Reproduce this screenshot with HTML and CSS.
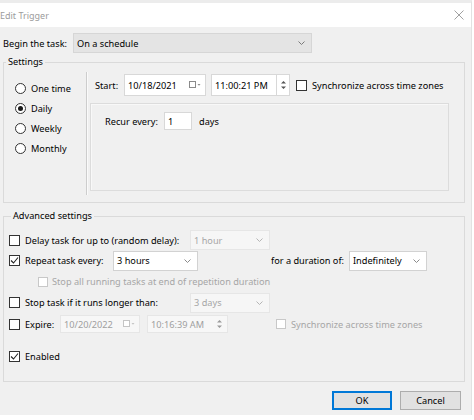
FILE: index.html
```html
<!DOCTYPE html>
<html>
<head>
<meta charset="utf-8">
<title>Edit Trigger</title>
<link rel="stylesheet" href="styles.css">
</head>
<body>
<div class="dialog">
  <div class="titlebar">
    <span class="title">Edit Trigger</span>
    <svg class="close" width="10" height="10" viewBox="0 0 10 10"><path d="M0.5 0.5L9.5 9.5M9.5 0.5L0.5 9.5" stroke="#a0a0a0" stroke-width="1"/></svg>
  </div>
  <div class="content">
    <div class="begin-row">
      <span class="begin-label">Begin the task:</span>
      <div class="combo grey w-begin"><span>On a schedule</span><svg class="chev" width="7" height="4" viewBox="0 0 7 4"><path d="M0.5 0.5L3.5 3.5L6.5 0.5" fill="none" stroke="#7a7a7a"/></svg></div>
    </div>

    <fieldset class="group settings">
      <legend>Settings</legend>
      <div class="radios">
        <div class="radio-row"><span class="radio"></span>One time</div>
        <div class="radio-row"><span class="radio on"></span>Daily</div>
        <div class="radio-row"><span class="radio"></span>Weekly</div>
        <div class="radio-row"><span class="radio"></span>Monthly</div>
      </div>
      <div class="vsep"></div>
      <div class="pane">
        <div class="start-row">
          <span class="start-label">Start:</span>
          <div class="field date"><span>10/18/2021</span><svg class="cal" width="12" height="8" viewBox="0 0 12 8"><rect x="0.5" y="0.5" width="6" height="6" fill="#fff" stroke="#8a8a8a"/><path d="M8.5 3L11.5 3L10 4.8Z" fill="#8a8a8a"/></svg></div>
          <div class="field time"><span>11:00:21 PM</span></div>
          <div class="spin"><svg width="7" height="12" viewBox="0 0 7 12"><path d="M1 4.5L3.5 2L6 4.5Z M1 7.5L3.5 10L6 7.5Z" fill="#555"/></svg></div>
          <span class="cb sync-cb"></span>
          <span>Synchronize across time zones</span>
        </div>
        <div class="recur-box">
          <div class="recur-row">
            <span class="recur-label">Recur every:</span>
            <div class="field recur">1</div>
            <span class="days">days</span>
          </div>
        </div>
      </div>
    </fieldset>

    <fieldset class="group advanced">
      <legend>Advanced settings</legend>
      <div class="adv-row r1">
        <div class="cbl w181"><span class="cb"></span><span>Delay task for up to (random delay):</span></div>
        <div class="combo disabled w80"><span>1 hour</span><svg class="chev" width="7" height="4" viewBox="0 0 7 4"><path d="M0.5 0.5L3.5 3.5L6.5 0.5" fill="none" stroke="#b5b5b5"/></svg></div>
      </div>
      <div class="adv-row r2">
        <div class="cbl w104"><span class="cb checked"><svg width="9" height="9" viewBox="0 0 9 9"><path d="M1 4.5L3.5 7L8 1.5" fill="none" stroke="#222" stroke-width="1.1"/></svg></span><span>Repeat task every:</span></div>
        <div class="combo w85"><span>3 hours</span><svg class="chev" width="7" height="4" viewBox="0 0 7 4"><path d="M0.5 0.5L3.5 3.5L6.5 0.5" fill="none" stroke="#8a8a8a"/></svg></div>
        <span class="dur-label">for a duration of:</span>
        <div class="combo w78"><span>Indefinitely</span><svg class="chev" width="7" height="4" viewBox="0 0 7 4"><path d="M0.5 0.5L3.5 3.5L6.5 0.5" fill="none" stroke="#8a8a8a"/></svg></div>
      </div>
      <div class="adv-row r3">
        <div class="cbl sub"><span class="cb dis"></span><span class="dim">Stop all running tasks at end of repetition duration</span></div>
      </div>
      <div class="adv-row r4">
        <div class="cbl w181"><span class="cb"></span><span>Stop task if it runs longer than:</span></div>
        <div class="combo disabled w80"><span>3 days</span><svg class="chev" width="7" height="4" viewBox="0 0 7 4"><path d="M0.5 0.5L3.5 3.5L6.5 0.5" fill="none" stroke="#b5b5b5"/></svg></div>
      </div>
      <div class="adv-row r5">
        <div class="cbl w51"><span class="cb"></span><span>Expire:</span></div>
        <div class="field date disabled"><span>10/20/2022</span><svg class="cal" width="12" height="8" viewBox="0 0 12 8"><rect x="0.5" y="0.5" width="6" height="6" fill="#fff" stroke="#c4c4c4"/><path d="M8.5 3L11.5 3L10 4.8Z" fill="#c4c4c4"/></svg></div>
        <div class="field time2 disabled"><span>10:16:39 AM</span><svg width="7" height="12" viewBox="0 0 7 12"><path d="M1 4.5L3.5 2L6 4.5Z M1 7.5L3.5 10L6 7.5Z" fill="#9a9a9a"/></svg></div>
        <span class="cb dis exp-sync"></span>
        <span class="dim">Synchronize across time zones</span>
      </div>
      <div class="adv-row r6">
        <div class="cbl"><span class="cb checked"><svg width="9" height="9" viewBox="0 0 9 9"><path d="M1 4.5L3.5 7L8 1.5" fill="none" stroke="#222" stroke-width="1.1"/></svg></span><span>Enabled</span></div>
      </div>
    </fieldset>

    <div class="buttons">
      <div class="btn ok">OK</div>
      <div class="btn">Cancel</div>
    </div>
  </div>
</div>
</body>
</html>
```
FILE: styles.css
```css
html, body {
  margin: 0;
  padding: 0;
}
body {
  background: #ffffff;
  font-family: "Noto Sans", "Open Sans", sans-serif;
  font-size: 9.2px;
  color: #000;
  width: 474px;
  height: 420px;
  overflow: hidden;
}
.dialog {
  width: 472px;
  height: 415px;
  box-sizing: border-box;
  border-top: 3px solid #ececec;
  border-right: 1px solid #e2e2e2;
  background: #f0f0f0;
  display: flex;
  flex-direction: column;
}
.titlebar {
  height: 24px;
  flex: none;
  background: #fff;
  display: flex;
  align-items: center;
  justify-content: space-between;
  padding-right: 7px;
  color: #9c9c9c;
  font-size: 9px;
}
.title {
  margin-left: 0;
}
.content {
  padding: 6px 6px 0 3px;
  display: flex;
  flex-direction: column;
}
.begin-row {
  display: flex;
  align-items: center;
  height: 20px;
}
.begin-label {
  width: 70px;
}
.combo {
  display: flex;
  align-items: center;
  justify-content: space-between;
  box-sizing: border-box;
  height: 20px;
  border: 1px solid #d2d2d2;
  background: #fff;
  padding: 0 6px 0 3px;
}
.combo.grey {
  background: #e4e4e4;
  border-color: #d6d6d6;
}
.combo.disabled {
  background: #f6f6f6;
  border-color: #e6e6e6;
  color: #a6a6a6;
}
.w-begin { width: 239px; }
.w80 { width: 80px; }
.w85 { width: 85px; }
.w78 { width: 78px; }

fieldset.group {
  margin: 0;
  padding: 0;
  min-width: 0;
  border: 1px solid #dadada;
  box-sizing: border-box;
}
fieldset.group legend {
  margin-left: 2px;
  padding: 0 2px;
  line-height: 14px;
  height: 14px;
}
.settings {
  margin-top: 2px !important;
  height: 148px;
  display: flex;
}
.radios {
  width: 82px;
  flex: none;
  box-sizing: border-box;
  padding: 9px 0 0 11px;
}
.radio-row {
  height: 20px;
  display: flex;
  align-items: center;
}
.radio {
  width: 11px;
  height: 11px;
  box-sizing: border-box;
  border: 1px solid #333;
  border-radius: 50%;
  background: #fff;
  margin-right: 5px;
  display: flex;
  align-items: center;
  justify-content: center;
}
.radio.on::after {
  content: "";
  width: 5px;
  height: 5px;
  border-radius: 50%;
  background: #1a1a1a;
}
.vsep {
  width: 1px;
  flex: none;
  margin-top: 3px;
  height: 123px;
  background: #cdcdcd;
  box-shadow: 1px 0 0 #fafafa;
}
.pane {
  flex: 1;
  display: flex;
  flex-direction: column;
  padding: 5px 0 0 3px;
}
.start-row {
  height: 22px;
  display: flex;
  align-items: center;
  padding-left: 5px;
}
.start-label {
  width: 29px;
}
.field {
  height: 22px;
  box-sizing: border-box;
  border: 1px solid #d8d8d8;
  background: #fff;
  display: flex;
  align-items: center;
  justify-content: space-between;
  padding: 0 4px 0 3px;
}
.field.date {
  width: 82px;
}
.field.time {
  width: 66px;
  margin-left: 5px;
}
.spin {
  width: 13px;
  height: 22px;
  box-sizing: border-box;
  border: 1px solid #d8d8d8;
  border-left: none;
  background: #fff;
  display: flex;
  align-items: center;
  justify-content: center;
}
.cb {
  width: 11px;
  height: 11px;
  flex: none;
  box-sizing: border-box;
  border: 1px solid #333;
  background: #fff;
  margin-right: 5px;
  display: flex;
  align-items: center;
  justify-content: center;
}
.cb.dis {
  border-color: #c8c8c8;
  width: 10px;
  height: 10px;
}
.sync-cb {
  margin-left: 6px;
}
.recur-box {
  margin-top: 7px;
  width: 359px;
  height: 88px;
  box-sizing: border-box;
  border: 1px solid #dcdcdc;
  box-shadow: inset 1px 1px 0 #f8f8f8;
}
.recur-row {
  display: flex;
  align-items: center;
  height: 18px;
  padding: 8px 0 0 14px;
}
.recur-label {
  width: 59px;
}
.field.recur {
  width: 28px;
  height: 18px;
  justify-content: flex-start;
}
.days {
  margin-left: 7px;
}

.advanced {
  margin-top: 6px !important;
  height: 173px;
  padding: 7px 0 0 5px !important;
}
.adv-row {
  display: flex;
  align-items: center;
}
.cbl {
  display: flex;
  align-items: center;
  flex: none;
}
.w181 { width: 181px; }
.w104 { width: 104px; }
.w51 { width: 51px; }
.r1 { height: 20px; }
.r2 { height: 21px; }
.r3 { height: 21px; }
.r4 { height: 21px; }
.r5 { height: 22px; }
.r6 { height: 20px; margin-top: 11px; }
.dur-label {
  margin-left: 73px;
  width: 78px;
}
.sub {
  margin-left: 29px;
}
.sub .cb {
  margin-right: 4px;
}
.dim {
  color: #a6a6a6;
}
.field.disabled {
  border-color: #e6e6e6;
  background: #f7f7f7;
  color: #a0a0a0;
  height: 18px;
}
.r5 .field.date {
  width: 80px;
}
.field.time2 {
  width: 81px;
  margin-left: 7px;
}
.exp-sync {
  margin-left: 48px;
}
.buttons {
  display: flex;
  justify-content: flex-end;
  gap: 8px;
  margin-top: 9px;
  padding-right: 4px;
}
.btn {
  width: 61px;
  height: 19px;
  box-sizing: border-box;
  border: 1px solid #adadad;
  background: #e1e1e1;
  display: flex;
  align-items: center;
  justify-content: center;
}
.btn.ok {
  width: 60px;
  border: 2px solid #0078d7;
}
```
